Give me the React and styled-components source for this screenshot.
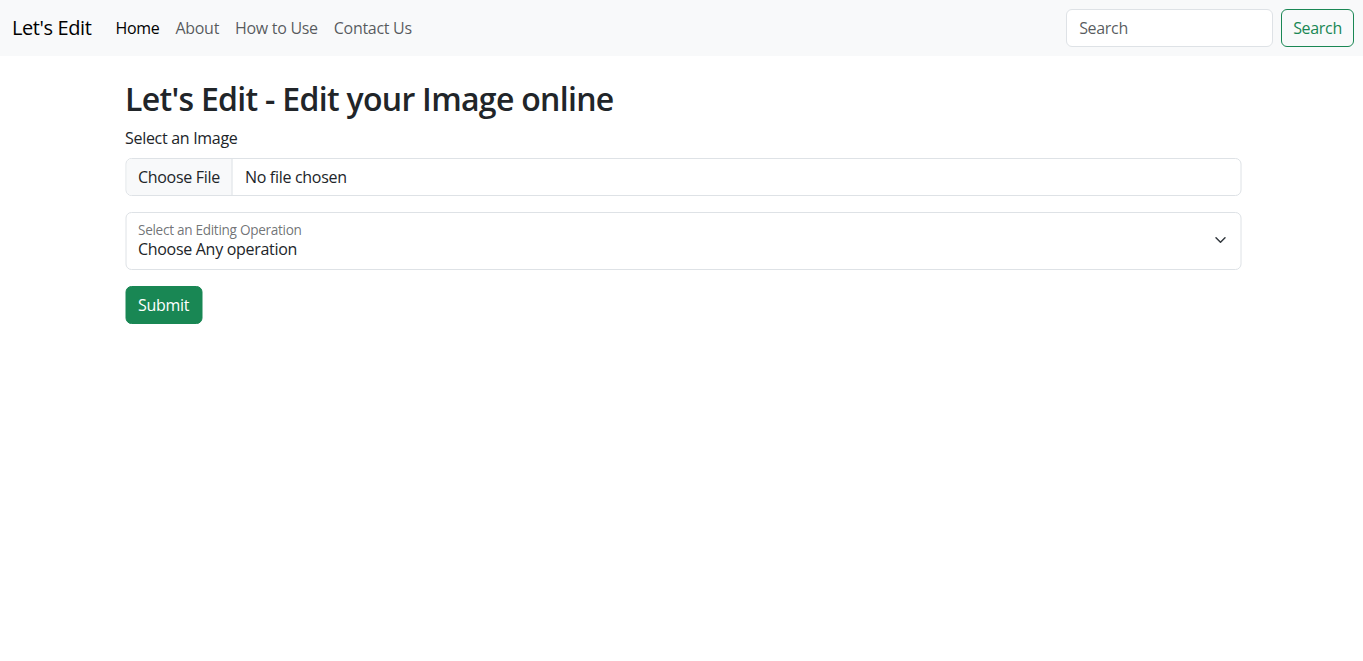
import React from "react";
import styled, { createGlobalStyle } from "styled-components";

const GlobalStyle = createGlobalStyle`
  *, *::before, *::after { box-sizing: border-box; }
  body {
    margin: 0;
    font-family: "Segoe UI", "Open Sans", "Liberation Sans", sans-serif;
    font-size: 16px;
    line-height: 1.5;
    letter-spacing: -0.3px;
    color: #212529;
    background: #fff;
  }
`;

// Barra de navegação

const Navbar = styled.nav`
  height: 56px;
  background-color: #f8f9fa;
  display: flex;
  align-items: center;
  justify-content: space-between;
  padding: 0 9px 0 12px;
`;

const NavLeft = styled.div`
  display: flex;
  align-items: center;
`;

const Brand = styled.a`
  font-size: 20px;
  letter-spacing: -0.4px;
  color: #000;
  text-decoration: none;
  margin-right: 16px;
`;

const NavLink = styled.a`
  padding: 8px;
  font-size: 16px;
  text-decoration: none;
  color: ${(p) => (p.$active ? "#000" : "rgba(33, 37, 41, 0.75)")};
`;

const SearchForm = styled.form`
  display: flex;
  gap: 8px;
`;

const SearchInput = styled.input`
  width: 207px;
  height: 38px;
  padding: 6px 12px;
  font: inherit;
  letter-spacing: inherit;
  border: 1px solid #dee2e6;
  border-radius: 6px;
  background: #fff;
  color: #212529;
  &::placeholder { color: rgba(33, 37, 41, 0.75); }
`;

const OutlineButton = styled.button`
  height: 38px;
  padding: 6px 11px;
  font: inherit;
  letter-spacing: inherit;
  color: #198754;
  background: transparent;
  border: 1px solid #198754;
  border-radius: 6px;
`;

// Conteúdo

const Container = styled.main`
  max-width: 1116px;
  margin: 0 auto;
  padding-top: 24px;
  transform: translateX(1.5px);
`;

const Title = styled.h1`
  font-size: 32px;
  font-weight: 600;
  line-height: 1.2;
  letter-spacing: -0.7px;
  margin: 0 0 8px;
`;

const Label = styled.label`
  display: block;
  margin-bottom: 8px;
`;

const FileBox = styled.div`
  display: flex;
  height: 38px;
  border: 1px solid #dee2e6;
  border-radius: 6px;
  overflow: hidden;
  margin-bottom: 16px;
`;

const FileButton = styled.span`
  display: flex;
  align-items: center;
  padding: 0 12px;
  background: #f8f9fa;
  border-right: 1px solid #dee2e6;
`;

const FileText = styled.span`
  display: flex;
  align-items: center;
  padding: 0 12px;
`;

const FloatingSelect = styled.div`
  position: relative;
  height: 58px;
  border: 1px solid #dee2e6;
  border-radius: 6px;
  padding: 8px 12px 0;
  margin-bottom: 16px;
`;

const FloatLabel = styled.div`
  font-size: 13.6px;
  line-height: 1.3;
  color: rgba(33, 37, 41, 0.65);
`;

const SelectValue = styled.div`
  line-height: 1.3;
`;

const Chevron = styled.svg`
  position: absolute;
  right: 14px;
  top: 21px;
`;

const SubmitButton = styled.button`
  height: 38px;
  padding: 6px 12px;
  font: inherit;
  letter-spacing: inherit;
  color: #fff;
  background: #198754;
  border: 1px solid #198754;
  border-radius: 6px;
`;

const App = () => {
  return (
    <>
      <GlobalStyle />
      <Navbar>
        <NavLeft>
          <Brand href="#">Let's Edit</Brand>
          <NavLink href="#" $active>Home</NavLink>
          <NavLink href="#">About</NavLink>
          <NavLink href="#">How to Use</NavLink>
          <NavLink href="#">Contact Us</NavLink>
        </NavLeft>
        <SearchForm onSubmit={(e) => e.preventDefault()}>
          <SearchInput placeholder="Search" />
          <OutlineButton type="submit">Search</OutlineButton>
        </SearchForm>
      </Navbar>

      <Container>
        <Title>Let's Edit - Edit your Image online</Title>
        <Label>Select an Image</Label>
        <FileBox>
          <FileButton>Choose File</FileButton>
          <FileText>No file chosen</FileText>
        </FileBox>
        <FloatingSelect>
          <FloatLabel>Select an Editing Operation</FloatLabel>
          <SelectValue>Choose Any operation</SelectValue>
          <Chevron width="12" height="12" viewBox="0 0 16 16">
            <path d="m2 5 6 6 6-6" fill="none" stroke="#343a40" strokeWidth="2" strokeLinecap="round" strokeLinejoin="round" />
          </Chevron>
        </FloatingSelect>
        <SubmitButton type="submit">Submit</SubmitButton>
      </Container>
    </>
  );
};

export default App;
